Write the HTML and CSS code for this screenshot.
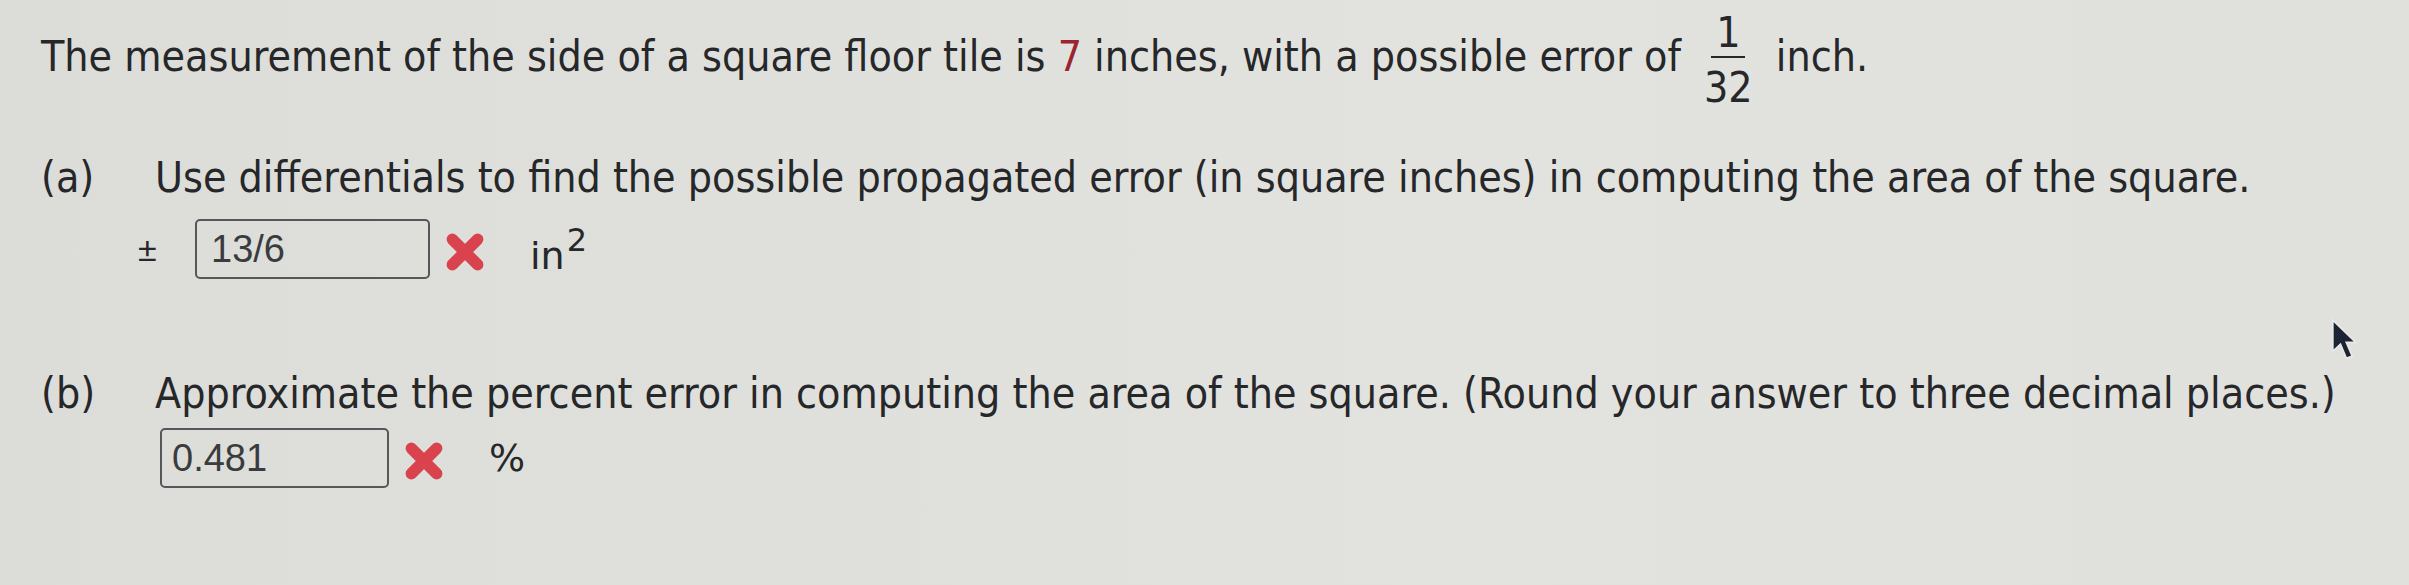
FILE: index.html
```html
<!DOCTYPE html>
<html>
<head>
<meta charset="utf-8">
<link rel="stylesheet" href="styles.css">
</head>
<body>
<div class="page">
  <p class="intro">The measurement of the side of a square floor tile is <span class="given">7</span> inches, with a possible error of <span class="frac"><span class="num">1</span><span class="den">32</span></span> inch.</p>

  <div class="part part-a">
    <div class="label">(a)</div>
    <div class="body">
      <p class="question">Use differentials to find the possible propagated error (in square inches) in computing the area of the square.</p>
      <div class="answer">
        <span class="pm">±</span>
        <span class="box box-a">13/6</span>
        <svg class="wrong" viewBox="0 0 40 40" aria-hidden="true"><path d="M9 9 L31 31 M31 9 L9 31" stroke="#d8434e" stroke-width="10" stroke-linecap="round"/></svg>
        <span class="unit">in<sup>2</sup></span>
      </div>
    </div>
  </div>

  <div class="part part-b">
    <div class="label">(b)</div>
    <div class="body">
      <p class="question">Approximate the percent error in computing the area of the square. (Round your answer to three decimal places.)</p>
      <div class="answer">
        <span class="box box-b">0.481</span>
        <svg class="wrong" viewBox="0 0 40 40" aria-hidden="true"><path d="M9 9 L31 31 M31 9 L9 31" stroke="#d8434e" stroke-width="10" stroke-linecap="round"/></svg>
        <span class="unit">%</span>
      </div>
    </div>
  </div>
</div>
<svg class="cursor" viewBox="0 0 22 36" aria-hidden="true"><path d="M1.5 1.5 L1.5 28 L8 22 L13 34 L18 32 L13 20.5 L21 20.5 Z" fill="#1c2433" stroke="#e8e8e6" stroke-width="1.5"/></svg>
</body>
</html>
```

FILE: styles.css
```css
html, body {
  margin: 0;
  padding: 0;
  background: #dfdfdc;
}
body {
  width: 2409px;
  height: 585px;
  overflow: hidden;
  position: relative;
  background: linear-gradient(90deg, #dcdcd9 0%, #e2e2df 60%, #e0e0dd 100%);
  font-family: "DejaVu Sans Condensed", "DejaVu Sans", Verdana, sans-serif;
  color: #262729;
}
.page {
  padding: 7px 0 0 41px;
}
p { margin: 0; }
.intro {
  font-size: 42.5px;
  height: 100px;
  line-height: 100px;
  display: flex;
  align-items: center;
  white-space: pre;
}
.given { color: #9b2430; }
.frac {
  display: inline-flex;
  flex-direction: column;
  align-items: center;
  margin: 14px 6px 0 6px;
}
.num {
  line-height: 46px;
  padding: 0 5px;
  border-bottom: 2px solid #262729;
}
.den {
  line-height: 60px;
  padding: 0 5px;
}
.part {
  display: grid;
  grid-template-columns: 114px 1fr;
  font-size: 42.5px;
}
.part-a { margin-top: 46px; }
.part-b { margin-top: 90px; }
.label { line-height: 50px; }
.question { line-height: 50px; }
.answer {
  display: flex;
  align-items: center;
  margin-top: 16px;
}
.part-a .answer { margin-left: -17px; }
.part-b .answer { margin-top: 9px; }
.pm { width: 57px; font-family: "Liberation Sans", Arial, sans-serif; font-size: 34px; }
.box {
  box-sizing: border-box;
  height: 60px;
  border: 2px solid #55575a;
  border-radius: 5px;
  font-family: "Liberation Sans", Arial, sans-serif;
  font-size: 38px;
  color: #3a3b3d;
  padding: 0 10px;
  display: flex;
  align-items: center;
}
.box-a { width: 235px; padding-left: 14px; }
.box-b { width: 229px; margin-left: 5px; }
.wrong { width: 46px; height: 46px; margin: 6px 0 0 12px; }
.unit {
  margin-left: 42px;
  font-family: "DejaVu Sans", Verdana, sans-serif;
  font-size: 38px;
  color: #262729;
}
.unit sup { font-size: 32px; vertical-align: 18px; margin-left: 2px; }
.cursor {
  position: absolute;
  left: 2331px;
  top: 318px;
  width: 26px;
  height: 43px;
}
```
